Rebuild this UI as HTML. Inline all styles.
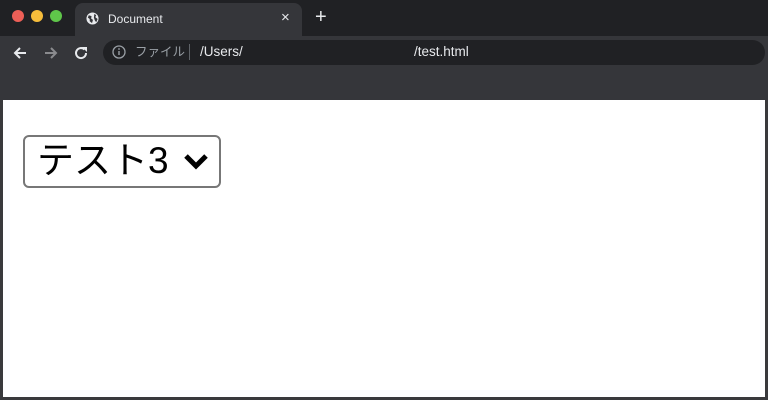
<!DOCTYPE html>
<html><head><meta charset="utf-8"><style>
*{margin:0;padding:0;box-sizing:border-box}
body{width:768px;height:400px;background:#3a3a3c;position:relative;overflow:hidden;font-family:"Liberation Sans","Noto Sans CJK JP",sans-serif}
.top{position:absolute;left:0;top:0;width:768px;height:36px;background:#202124}
.dot{position:absolute;top:10px;width:12px;height:12px;border-radius:50%}
.tab{position:absolute;left:75px;top:3px;width:227px;height:34px;background:#35363a;border-radius:8px 8px 0 0}
.bar{position:absolute;left:0;top:36px;width:768px;height:64px;background:#35363a}
.url{position:absolute;left:103px;top:40px;width:662px;height:25px;background:#202124;border-radius:13px}
.content{position:absolute;left:3px;top:100px;width:762px;height:297px;background:#fff}
.sel{position:absolute;left:23px;top:135px;width:198px;height:53px;border:2px solid #777;border-radius:6px;font-size:37px;color:#000;padding-left:12px;line-height:48px}
.t{position:absolute;color:#e8eaed;font-size:12px;line-height:14px}
</style></head><body>
<div class="top"></div>
<div class="dot" style="left:12px;background:#ed5f57"></div>
<div class="dot" style="left:31px;background:#f6bd3b"></div>
<div class="dot" style="left:50px;background:#5fc64a"></div>
<div class="tab"></div>
<svg style="position:absolute;left:86px;top:12px" width="13" height="13" viewBox="0 0 14 14"><circle cx="7" cy="7" r="6.5" fill="#e8eaed"/><path d="M3 3.5 L6 4.5 L5.5 7 L7.5 8.5 L6.5 12 L4 10 L4 7.5 L2 6 Z M9 2 L11 3.5 L10 5.5 L12.5 7.5 L11 11 L9.5 9 L8.5 6 Z" fill="#35363a"/></svg>
<div class="t" style="left:108px;top:12px">Document</div>
<div class="t" style="left:281px;top:11px;font-size:15px">×</div>
<div class="t" style="left:315px;top:10px;font-size:20px;font-weight:300">+</div>
<div class="bar"></div>
<div class="url"></div>
<svg style="position:absolute;left:12px;top:45px" width="16" height="16" viewBox="0 0 16 16"><path d="M14 8H3M8 3L3 8l5 5" stroke="#e8eaed" stroke-width="2" fill="none"/></svg>
<svg style="position:absolute;left:43px;top:45px" width="16" height="16" viewBox="0 0 16 16"><path d="M2 8h11M8 3l5 5-5 5" stroke="#8a8b8e" stroke-width="2" fill="none"/></svg>
<svg style="position:absolute;left:73px;top:45px" width="16" height="16" viewBox="0 0 16 16"><path d="M13 8a5 5 0 1 1-1.5-3.5" stroke="#e8eaed" stroke-width="2" fill="none"/><path d="M9 2h5v5z" fill="#e8eaed"/></svg>
<svg style="position:absolute;left:112px;top:45px" width="14" height="14" viewBox="0 0 14 14"><circle cx="7" cy="7" r="6" stroke="#9aa0a6" stroke-width="1.3" fill="none"/><path d="M7 6v4" stroke="#9aa0a6" stroke-width="1.4"/><circle cx="7" cy="4" r=".9" fill="#9aa0a6"/></svg>
<div class="t" style="left:135px;top:45px;color:#9aa0a6;font-size:12.5px">ファイル</div>
<div style="position:absolute;left:189px;top:44px;width:1px;height:16px;background:#5f6368"></div>
<div class="t" style="left:200px;top:45px;font-size:13.5px">/Users/</div>
<div class="t" style="left:414px;top:45px;font-size:13.5px">/test.html</div>
<div class="content"></div>
<div class="sel">テスト3<svg style="position:absolute;left:158px;top:16px" width="26" height="18" viewBox="0 0 26 18"><path d="M3 3l10 10 10-10" stroke="#000" stroke-width="5" fill="none"/></svg></div>
</body></html>
